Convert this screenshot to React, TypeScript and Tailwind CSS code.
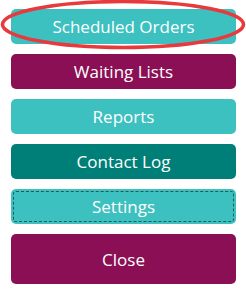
const items = [
  { label: 'Scheduled Orders', cls: 'bg-[#3cc0c0]' },
  { label: 'Waiting Lists', cls: 'bg-[#8b0f54]' },
  { label: 'Reports', cls: 'bg-[#3cc0c0]' },
  { label: 'Contact Log', cls: 'bg-[#007f78]' },
  { label: 'Settings', cls: 'bg-[#3cc0c0] outline-1 outline-dashed outline-[#1d5a5a] -outline-offset-[3px]' },
];

export default function App() {
  return (
    <div className="relative w-[246px] h-[294px] bg-white font-['Open_Sans',sans-serif]">
      <div className="flex flex-col gap-[10px] px-[11px] pt-[9px]">
        {items.map((it) => (
          <button
            key={it.label}
            className={`h-[35px] w-[225px] rounded-[5px] text-white text-[17px] leading-none ${it.cls}`}
          >
            {it.label}
          </button>
        ))}
        <button className="h-[50px] w-[225px] rounded-[5px] bg-[#8b0f54] text-white text-[17px] leading-none">
          Close
        </button>
      </div>
      {/* red annotation ring */}
      <svg className="absolute left-0 top-0 pointer-events-none" width="246" height="60">
        <ellipse cx="123" cy="24.5" rx="120.5" ry="23" fill="none" stroke="#e8393c" strokeWidth="3.5" />
      </svg>
    </div>
  );
}
